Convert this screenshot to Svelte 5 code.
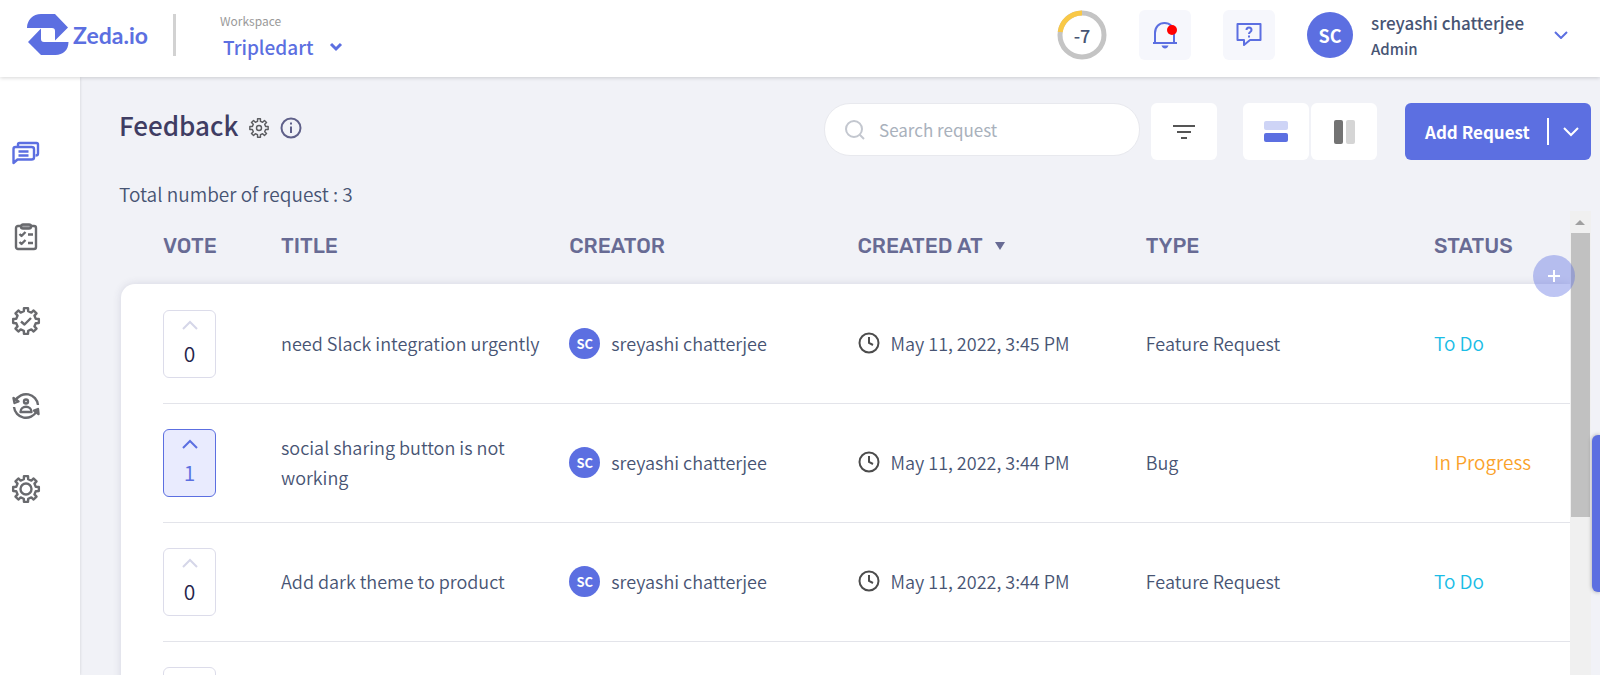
<script lang="ts">
	interface Request {
		votes: number;
		voted: boolean;
		title: string;
		creator: string;
		createdAt: string;
		type: string;
		status: 'To Do' | 'In Progress';
	}

	let requests = $state<Request[]>([
		{
			votes: 0,
			voted: false,
			title: 'need Slack integration urgently',
			creator: 'sreyashi chatterjee',
			createdAt: 'May 11, 2022, 3:45 PM',
			type: 'Feature Request',
			status: 'To Do'
		},
		{
			votes: 1,
			voted: true,
			title: 'social sharing button is not working',
			creator: 'sreyashi chatterjee',
			createdAt: 'May 11, 2022, 3:44 PM',
			type: 'Bug',
			status: 'In Progress'
		},
		{
			votes: 0,
			voted: false,
			title: 'Add dark theme to product',
			creator: 'sreyashi chatterjee',
			createdAt: 'May 11, 2022, 3:44 PM',
			type: 'Feature Request',
			status: 'To Do'
		}
	]);

	let search = $state('');

	let visible = $derived(
		requests.filter((r) => r.title.toLowerCase().includes(search.toLowerCase()))
	);

	function toggleVote(request: Request) {
		request.votes += request.voted ? -1 : 1;
		request.voted = !request.voted;
	}

	function initials(name: string) {
		return name
			.split(' ')
			.map((part) => part[0].toUpperCase())
			.join('');
	}

	// outline of a cog, centred on 14,14
	function cog(teeth: number, outer: number, inner: number) {
		const step = (Math.PI * 2) / teeth;
		const points: string[] = [];
		for (let i = 0; i < teeth; i++) {
			const mid = i * step - Math.PI / 2;
			for (const [offset, radius] of [
				[-0.28, inner],
				[-0.2, outer],
				[0.2, outer],
				[0.28, inner]
			]) {
				const angle = mid + offset * step;
				points.push(
					`${(14 + radius * Math.cos(angle)).toFixed(2)} ${(14 + radius * Math.sin(angle)).toFixed(2)}`
				);
			}
		}
		return `M${points.join('L')}Z`;
	}
</script>

{#snippet voteBox(request: Request)}
	<button
		class="vote"
		class:voted={request.voted}
		aria-label="Vote for {request.title}"
		onclick={() => toggleVote(request)}
	>
		<svg width="16" height="10" viewBox="0 0 16 10"><path d="M1 9l7-7 7 7" /></svg>
		<span>{request.votes}</span>
	</button>
{/snippet}

<div class="app">
	<header class="topbar">
		<a class="logo" href="#home">
			<svg width="42" height="42" viewBox="0 0 42 42">
				<path
					fill="#5c6fe1"
					d="M0 14C0 6 6 0 14 0h14l13 13.5-13 13V17q0-3-3-3z M41.500 28c0 8-5.500 13-13 13H14L1 28l13-13.500V25q0 3 3 3z"
				/>
			</svg>
			<span>Zeda.io</span>
		</a>
		<div class="divider"></div>
		<div class="workspace">
			<span class="workspace-label">Workspace</span>
			<button class="workspace-name">
				Tripledart
				<svg width="14" height="10" viewBox="0 0 14 10">
					<path d="M2 2l5 5 5-5" fill="none" stroke="#5c6fe1" stroke-width="3" />
				</svg>
			</button>
		</div>

		<div class="account">
			<div class="ring">
				<svg width="50" height="50" viewBox="0 0 50 50">
					<circle cx="25" cy="25" r="22" fill="none" stroke="#c4c4c4" stroke-width="5" />
					<path d="M3.200 22A22 22 0 0 1 25 3" fill="none" stroke="#f9c846" stroke-width="5" />
				</svg>
				<span>-7</span>
			</div>
			<button class="tile" aria-label="Notifications">
				<svg width="26" height="28" viewBox="0 0 26 28" fill="none" stroke="#5c6fe1" stroke-width="2">
					<path d="M1 22h24M3 22V12C3 6 7 2 12.500 2S22 6 22 12v10" />
					<path d="M9.500 24.500h7q-1 3-3.500 3t-3.500-3z" fill="#5c6fe1" stroke="none" />
					<circle cx="20" cy="9" r="5" fill="#ff0000" stroke="none" />
				</svg>
			</button>
			<button class="tile" aria-label="Help">
				<svg width="26" height="26" viewBox="0 0 26 26" fill="none" stroke="#5c6fe1" stroke-width="2" stroke-linejoin="round">
					<path d="M1.500 2h23v16H14l-6 5v-5H1.500z" />
					<path d="M10.500 8c0-1.500 1-2.500 2.500-2.500s2.500 1 2.500 2.500c0 2-2.500 2-2.500 4M13 13.500v2" />
				</svg>
			</button>
			<span class="avatar large">SC</span>
			<div class="who">
				<strong>sreyashi chatterjee</strong>
				<span>Admin</span>
			</div>
			<button class="plain" aria-label="Account menu">
				<svg width="14" height="8" viewBox="0 0 14 8">
					<path d="M1 1l6 6 6-6" fill="none" stroke="#5c6fe1" stroke-width="2" />
				</svg>
			</button>
		</div>
	</header>

	<div class="body">
		<nav class="sidebar">
			<a class="active" href="#feedback" aria-label="Feedback">
				<svg viewBox="0 0 28 28">
					<path d="M6 7V5.500Q6 4 7.500 4h17Q26 4 26 5.500v9q0 2-2.500 2" />
					<path d="M1.500 24V10Q1.500 8 3.500 8h16Q22 8 22 10v8.500q0 2-2.500 2H5.500z" />
					<path d="M6.500 12.500h10M6.500 16.500h10" />
				</svg>
			</a>
			<a href="#roadmap" aria-label="Roadmap">
				<svg viewBox="0 0 28 28">
					<rect x="4" y="3" width="20" height="23" rx="2" />
					<rect x="9" y="1.500" width="10" height="4" rx="2" fill="#a0a1a5" />
					<path d="M7.500 11l2 2 4-4M16 11.500h5M7.500 19l2 2 4-4M16 20h5" />
				</svg>
			</a>
			<a href="#releases" aria-label="Releases">
				<svg viewBox="0 0 28 28">
					<path d={cog(8, 13, 10)} />
					<path d="M9 14.500l3.500 3 6.500-6.500" />
				</svg>
			</a>
			<a href="#customers" aria-label="Customers">
				<svg viewBox="0 0 28 28">
					<path d="M3.500 9.500A12 12 0 0 1 26 14M24.500 20.500A12 12 0 0 1 2 16" />
					<path d="M1.500 7l1 5 4-1.500zM26.500 23l-.5-5-4 1.500z" />
					<circle cx="14" cy="10.500" r="2" />
					<path d="M8.500 21c0-7 11-7 11 0z" />
				</svg>
			</a>
			<a href="#settings" aria-label="Settings">
				<svg viewBox="0 0 28 28">
					<path d={cog(8, 13, 10)} />
					<circle cx="14" cy="14" r="5.500" />
				</svg>
			</a>
		</nav>

		<main>
			<div class="toolbar">
				<div class="heading">
					<h1>Feedback</h1>
					<button class="plain" aria-label="Feedback settings">
						<svg width="20" height="20" viewBox="0 0 28 28" fill="none" stroke="#5c5d61" stroke-width="2" stroke-linejoin="round">
							<path d={cog(8, 13, 9.500)} />
							<circle cx="14" cy="14" r="3.500" />
						</svg>
					</button>
					<button class="plain" aria-label="About feedback">
						<svg width="22" height="22" viewBox="0 0 22 22" fill="none" stroke="#5f6089" stroke-width="2">
							<circle cx="11" cy="11" r="9.500" />
							<path d="M11 9.500V16M11 5.500v2" />
						</svg>
					</button>
				</div>

				<label class="search">
					<svg width="20" height="20" viewBox="0 0 20 20" fill="none" stroke="#c3c7cf" stroke-width="2">
						<circle cx="9" cy="9" r="8" />
						<path d="M14.500 14.500L19 19" />
					</svg>
					<input type="text" placeholder="Search request" aria-label="Search request" bind:value={search} />
				</label>
				<button class="tool filter" aria-label="Filter">
					<svg width="22" height="14" viewBox="0 0 22 14" stroke="#555" stroke-width="2">
						<path d="M0 1h22M4 7h14M8 13h6" />
					</svg>
				</button>
				<div class="views">
					<button class="tool" aria-label="List view">
						<svg width="24" height="21" viewBox="0 0 24 21">
							<rect width="24" height="9" rx="2" fill="#ced4f6" />
							<rect y="12" width="24" height="9" rx="2" fill="#5c6fe1" />
						</svg>
					</button>
					<button class="tool" aria-label="Board view">
						<svg width="21" height="24" viewBox="0 0 21 24">
							<rect width="9" height="24" rx="2" fill="#737373" />
							<rect x="12" width="9" height="24" rx="2" fill="#d5d5d5" />
						</svg>
					</button>
				</div>
				<div class="add">
					<button>Add Request</button>
					<button class="more" aria-label="More ways to add">
						<svg width="16" height="10" viewBox="0 0 16 10">
							<path d="M1 1l7 7 7-7" fill="none" stroke="#fff" stroke-width="2" />
						</svg>
					</button>
				</div>
			</div>

			<p class="total">Total number of request : {requests.length}</p>

			<div class="list">
				<table>
					<thead>
						<tr>
							<th>VOTE</th>
							<th>TITLE</th>
							<th>CREATOR</th>
							<th>
								CREATED AT
								<svg width="10" height="8" viewBox="0 0 10 8"><path d="M0 0h10L5 8z" fill="#686b94" /></svg>
							</th>
							<th>TYPE</th>
							<th>STATUS</th>
						</tr>
					</thead>
					<tbody>
						{#each visible as request}
							<tr>
								<td>{@render voteBox(request)}</td>
								<td class="title">{request.title}</td>
								<td>
									<span class="avatar">{initials(request.creator)}</span>
									{request.creator}
								</td>
								<td>
									<svg width="22" height="22" viewBox="0 0 22 22" fill="none" stroke="#4c4c4c" stroke-width="2">
										<circle cx="11" cy="11" r="9.500" />
										<path d="M11 5v6l4 2" />
									</svg>
									{request.createdAt}
								</td>
								<td>{request.type}</td>
								<td class="status" class:progress={request.status === 'In Progress'}>
									{request.status}
								</td>
							</tr>
						{/each}
						<tr>
							<td>
								<button class="vote" aria-label="Vote"></button>
							</td>
						</tr>
					</tbody>
				</table>
				<div class="scrollbar">
					<svg width="19" height="22" viewBox="0 0 19 22"><path d="M4 14h10l-5-5z" fill="#a0a0a0" /></svg>
					<div class="thumb"></div>
				</div>
				<button class="add-column" aria-label="Add column">
					<svg width="12" height="12" viewBox="0 0 12 12"><path d="M6 0v12M0 6h12" stroke="#fff" stroke-width="2" /></svg>
				</button>
			</div>
		</main>
	</div>
	<button class="side-tab" aria-label="Open help panel"></button>
</div>

<style>
	:global(body) {
		margin: 0;
		overflow: hidden;
	}

	.app {
		position: relative;
		display: flex;
		flex-direction: column;
		height: 100vh;
		overflow: hidden;
		background: #f1f2f7;
		color: #475473;
		font-family: 'Source Sans Pro', 'Noto Sans CJK SC', 'Noto Sans', sans-serif;
		font-size: 18px;
		font-weight: 350;
		line-height: 30px;
	}

	button,
	input {
		padding: 0;
		border: 0;
		background: none;
		color: inherit;
		font: inherit;
	}

	button {
		cursor: pointer;
	}

	svg {
		display: block;
		flex: none;
	}

	.plain {
		display: flex;
	}

	/* top bar */

	.topbar {
		position: relative;
		z-index: 1;
		display: flex;
		align-items: center;
		flex: none;
		box-sizing: border-box;
		height: 77px;
		padding: 0 32px 7px 27px;
		background: #fff;
		box-shadow: 0 1px 4px rgba(0, 0, 0, 0.16);
	}

	.logo {
		display: flex;
		align-items: center;
		gap: 4px;
		width: 146px;
		color: #5c6fe1;
		font-family: Lato, sans-serif;
		font-size: 23px;
		font-weight: 700;
		text-decoration: none;
	}

	.divider {
		width: 3px;
		height: 42px;
		background: #d2d2d2;
	}

	.workspace {
		display: flex;
		flex-direction: column;
		margin-left: 44px;
	}

	.workspace-label {
		padding-top: 3px;
		color: #9a9a9a;
		font-size: 12px;
		font-weight: 400;
		line-height: 20px;
	}

	.workspace-name {
		display: flex;
		align-items: center;
		gap: 16px;
		padding-left: 3px;
		color: #5c6fe1;
		font-size: 19px;
		font-weight: 500;
		line-height: 32px;
	}

	.account {
		display: flex;
		align-items: center;
		margin-left: auto;
	}

	.ring {
		position: relative;
		margin-right: 32px;
	}

	.ring span {
		position: absolute;
		inset: 0;
		line-height: 50px;
		text-align: center;
		font-weight: 500;
	}

	.tile {
		display: flex;
		align-items: center;
		justify-content: center;
		width: 52px;
		height: 50px;
		margin-right: 32px;
		border-radius: 6px;
		background: #f6f7fc;
	}

	.avatar {
		display: inline-block;
		flex: none;
		width: 31px;
		height: 31px;
		border-radius: 50%;
		background: #5c6fe1;
		color: #fff;
		font-size: 13px;
		font-weight: 700;
		line-height: 31px;
		text-align: center;
	}

	.avatar.large {
		width: 46px;
		height: 46px;
		font-size: 18px;
		line-height: 46px;
	}

	.who {
		display: flex;
		flex-direction: column;
		width: 183px;
		margin-left: 18px;
		padding-top: 2px;
		font-size: 15px;
		font-weight: 500;
		line-height: 26px;
	}

	.who strong {
		font-size: 17px;
		font-weight: 500;
	}

	/* page body */

	.body {
		display: flex;
		flex: 1;
		min-height: 0;
	}

	.sidebar {
		display: flex;
		flex-direction: column;
		flex: none;
		gap: 56px;
		box-sizing: border-box;
		width: 80px;
		padding: 62px 0 0 12px;
		background: #fff;
		box-shadow: 0 0 3px rgba(0, 0, 0, 0.14);
	}

	.sidebar a {
		width: 28px;
		height: 28px;
		color: #696a6e;
	}

	.sidebar a.active {
		color: #5c6fe1;
	}

	.sidebar svg {
		overflow: visible;
		fill: none;
		stroke: currentColor;
		stroke-width: 2.4;
		stroke-linejoin: round;
	}

	main {
		display: flex;
		flex-direction: column;
		flex: 1;
		min-width: 0;
		padding: 26px 9px 0 39px;
	}

	.toolbar {
		display: flex;
		align-items: flex-start;
	}

	.heading {
		display: flex;
		align-items: center;
		gap: 11px;
		margin-right: auto;
		height: 49px;
	}

	h1 {
		margin: 0;
		padding-bottom: 6px;
		color: #3f3d63;
		font-size: 26px;
		font-weight: 500;
		line-height: 40px;
	}

	.search {
		display: flex;
		align-items: center;
		gap: 14px;
		box-sizing: border-box;
		width: 316px;
		height: 53px;
		padding: 0 20px;
		border: 1px solid #e8e9ee;
		border-radius: 26px;
		background: #fff;
		font-size: 17px;
		font-weight: 400;
	}

	.search input {
		flex: 1;
		min-width: 0;
		outline: none;
	}

	.search input::placeholder {
		color: #a9b1bc;
		opacity: 1;
	}

	.tool {
		display: flex;
		align-items: center;
		justify-content: center;
		width: 66px;
		height: 57px;
		border-radius: 6px;
		background: #fff;
	}

	.filter {
		margin: 0 26px 0 11px;
	}

	.views {
		display: flex;
		gap: 2px;
		margin-right: 28px;
	}

	.add {
		display: flex;
		align-items: center;
		justify-content: space-between;
		box-sizing: border-box;
		width: 186px;
		height: 57px;
		padding: 0 12px 0 20px;
		border-radius: 6px;
		background: #5c6fe1;
		color: #fff;
		font-size: 17px;
		font-weight: 700;
		white-space: nowrap;
	}

	.more {
		display: flex;
		align-items: center;
		height: 27px;
		padding-left: 14px;
		border-left: 2px solid #fff;
	}

	.total {
		margin: 19px 0 2px;
		font-size: 19px;
	}

	/* request list */

	.list {
		position: relative;
		display: flex;
		flex: 1;
		min-height: 0;
	}

	table {
		display: flex;
		flex-direction: column;
		flex: 1;
		min-width: 0;
		padding-left: 2px;
	}

	thead,
	tbody {
		display: block;
		padding-left: 42px;
	}

	tr {
		display: grid;
		grid-template-columns: 118px repeat(4, 1fr) 136px;
		align-items: center;
	}

	th {
		display: flex;
		align-items: center;
		gap: 12px;
		box-sizing: border-box;
		height: 73px;
		padding: 0 0 4px;
		color: #686b94;
		font-family: Rubik, Roboto, sans-serif;
		font-size: 21px;
		font-weight: 500;
	}

	tbody {
		flex: 1;
		padding-top: 1px;
		border-radius: 14px 0 0 0;
		background: #fff;
		box-shadow: 0 0 8px rgba(60, 60, 100, 0.14);
	}

	tbody tr {
		box-sizing: border-box;
		height: 119px;
		border-bottom: 1px solid #e3e4ea;
	}

	td {
		display: flex;
		align-items: center;
		gap: 11px;
		padding: 0 0 2px;
	}

	td:first-child {
		padding: 0;
	}

	td.title {
		padding-right: 24px;
	}

	.status {
		color: #1bbde6;
		font-size: 19px;
	}

	.status.progress {
		color: #faa22a;
	}

	.vote {
		display: flex;
		flex-direction: column;
		align-items: center;
		gap: 8px;
		box-sizing: border-box;
		width: 53px;
		height: 68px;
		padding-top: 9px;
		border: 1px solid #dcdcea;
		border-radius: 6px;
		color: #25244a;
		font-size: 21px;
	}

	.vote path {
		fill: none;
		stroke: #d5d6e8;
		stroke-width: 2;
	}

	.vote.voted {
		border-color: #5c6fe1;
		background: #e9ebfe;
		color: #5c6fe1;
	}

	.vote.voted path {
		stroke: #5c6fe1;
	}

	.scrollbar {
		box-sizing: border-box;
		width: 21px;
		padding: 0 1px;
		background: #f0f0f0;
	}

	.thumb {
		height: 284px;
		background: #c1c1c1;
	}

	.add-column {
		position: absolute;
		top: 44px;
		right: 16px;
		display: flex;
		align-items: center;
		justify-content: center;
		width: 42px;
		height: 42px;
		border-radius: 50%;
		background: rgba(92, 111, 225, 0.4);
	}

	.side-tab {
		position: absolute;
		top: 435px;
		right: 0;
		width: 8px;
		height: 157px;
		border-radius: 6px 0 0 6px;
		background: #5c6fe1;
		box-shadow: 0 0 4px rgba(0, 0, 0, 0.35);
	}
</style>
